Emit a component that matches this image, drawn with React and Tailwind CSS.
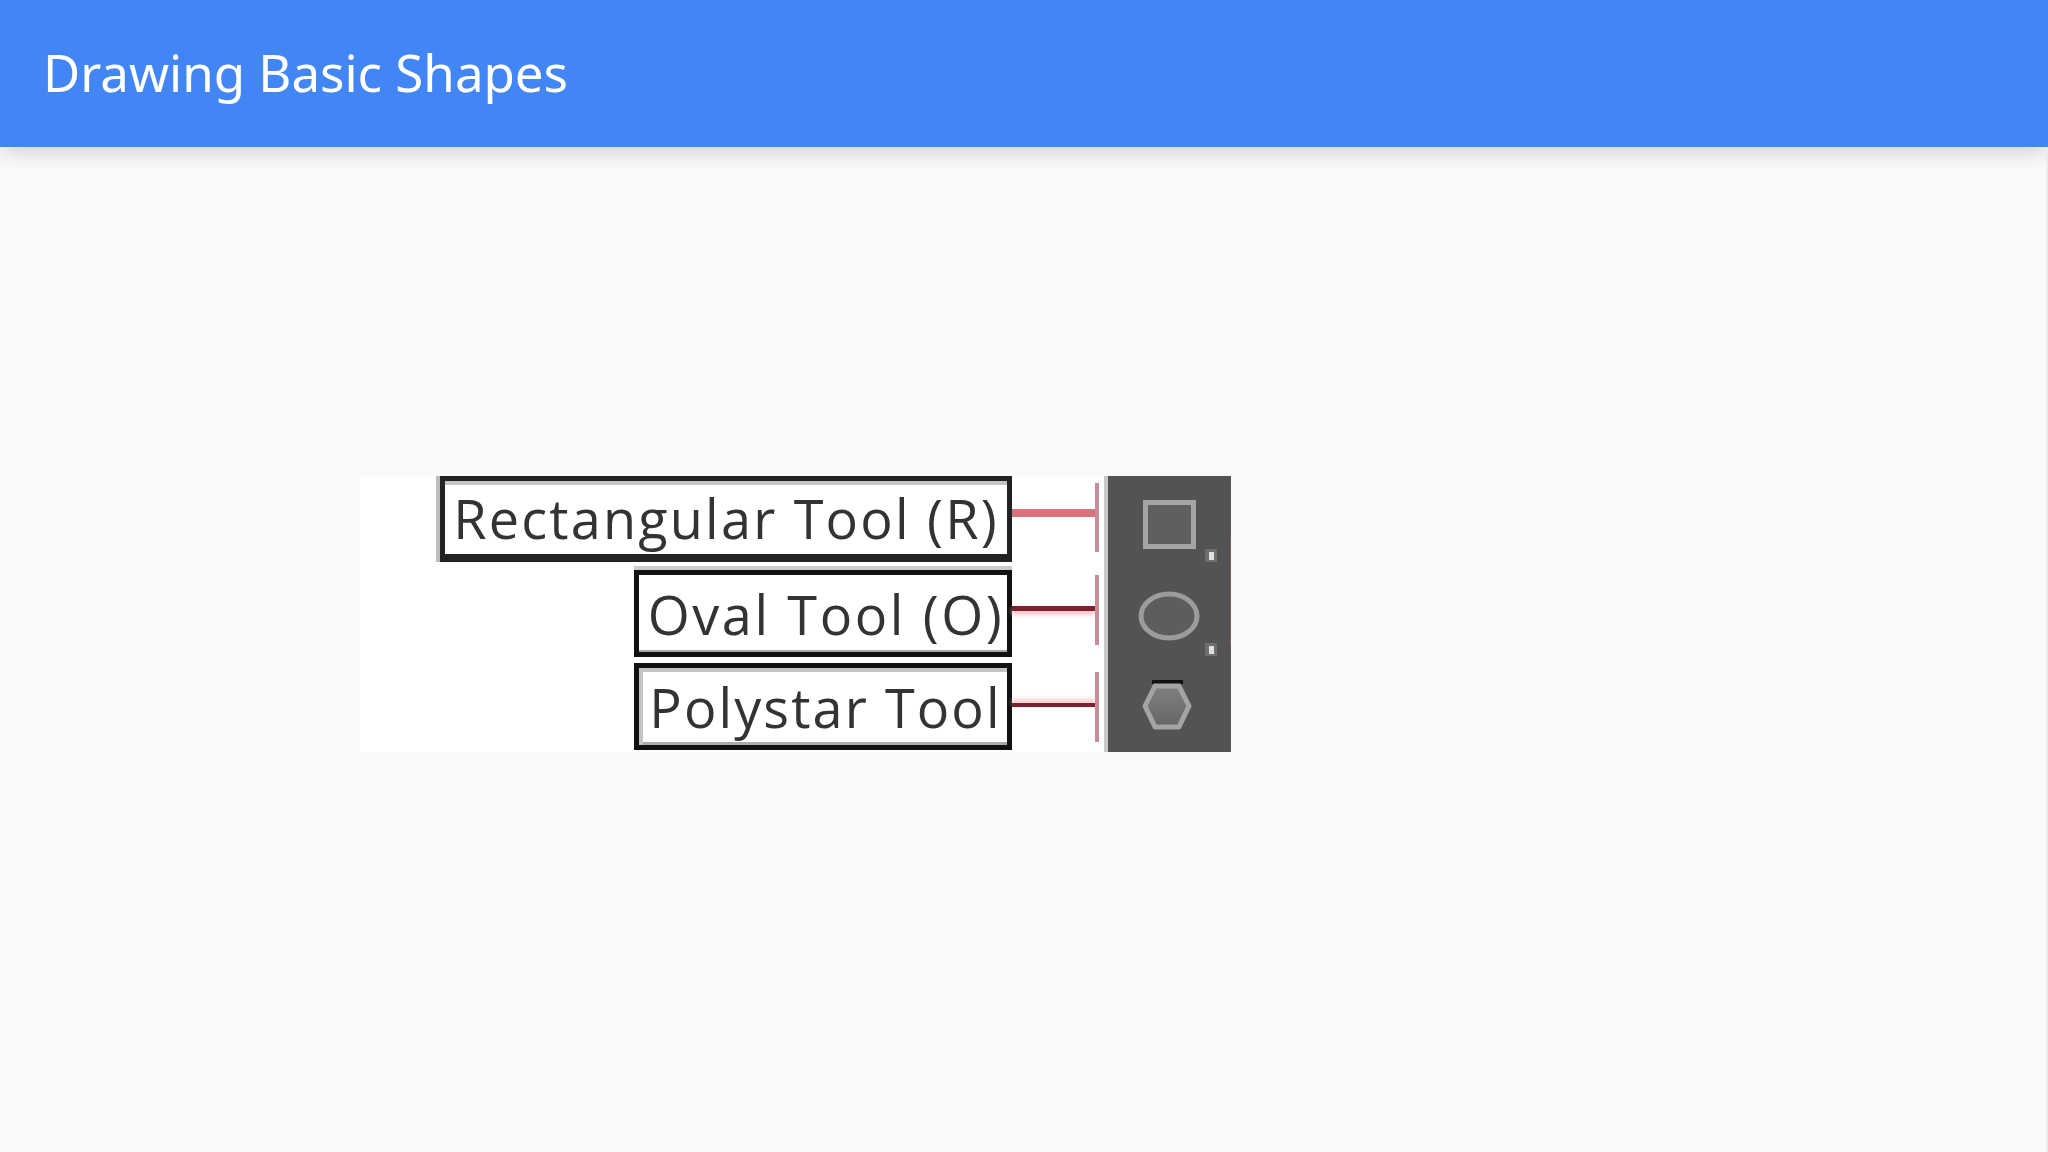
const rows = [
  { label: 'Rectangular Tool (R)', boxW: 'w-[572px]', boxH: 'h-[86px]', box: 'border-t-[5px] border-b-[8px] border-x-[5px] border-[#222] shadow-[-4px_0_0_#bbb,inset_0_4px_0_#c4c4c4]', line: 'h-[8px] bg-[#d9737b] mb-[12px]', tick: 'h-[69px] mb-[3px]', mt: 'mt-0', track: 'tracking-[2.2px]' },
  { label: 'Oval Tool (O)', boxW: 'w-[378px]', boxH: 'h-[87px]', box: 'border-[5px] border-[#111] pl-[6px] shadow-[0_-4px_0_#ccc,inset_0_-2px_0_#aaa]', line: 'h-[5px] bg-[#7d2030] mb-[11px] shadow-[0_3px_5px_#f9b0b0]', tick: 'h-[70px] mb-[7px]', mt: 'mt-[8px]', track: 'tracking-[2.6px]' },
  { label: 'Polystar Tool', boxW: 'w-[378px]', boxH: 'h-[87px]', box: 'border-[5px] border-[#111] pl-[5px] shadow-[inset_4px_4px_0_#c4c4c4,inset_0_-3px_0_#aaa]', line: 'h-[4px] bg-[#7d2030] mb-[4px] shadow-[0_-3px_5px_#f9b0b0]', tick: 'h-[70px]', mt: 'mt-[6px]', track: 'tracking-[2.1px]' },
]

const LabelRow = ({ row }) => (
  <div className={`flex items-center justify-end ${row.boxH} ${row.mt}`}>
    <div className={`${row.boxW} h-full ${row.box} bg-white flex items-center justify-center overflow-hidden`}>
      <span className={`font-['Open_Sans',sans-serif] font-normal text-[54px] leading-none whitespace-nowrap text-[#333] ${row.track}`}>
        {row.label}
      </span>
    </div>
    <div className={`w-[83px] ${row.line}`} />
    <div className={`w-[4px] ${row.tick} bg-[#c88b98]`} />
  </div>
)

// the three tool buttons of the toolbar
const ToolIcons = () => (
  <svg viewBox="0 0 123 276" className="w-full h-full block">
    <defs>
      <linearGradient id="hexFill" x1="0" y1="0" x2="0" y2="1">
        <stop offset="0" stopColor="#808080" />
        <stop offset="1" stopColor="#666666" />
      </linearGradient>
    </defs>
    <rect x="37.5" y="26.5" width="48" height="44" fill="#5f5f5f" stroke="#a5a5a5" strokeWidth="5" />
    <rect x="97" y="73" width="12" height="13" fill="#6e6e6e" />
    <rect x="101" y="76" width="5" height="8" fill="#e0e0e0" />
    <ellipse cx="61" cy="140" rx="28" ry="22" fill="#5d5d5d" stroke="#9c9c9c" strokeWidth="5" />
    <rect x="97" y="167" width="12" height="13" fill="#6e6e6e" />
    <rect x="101" y="170" width="5" height="8" fill="#e0e0e0" />
    <rect x="44" y="204" width="31" height="4" fill="#111" />
    <polygon points="47,210 71,210 81,230 71,251 47,251 37,230" fill="url(#hexFill)" stroke="#a4a4a4" strokeWidth="5" strokeLinejoin="round" />
    <rect x="122" y="60" width="1" height="110" fill="#8a5a5a" />
  </svg>
)

export default function App() {
  return (
    <div className="min-h-screen bg-[#fafafa] flex flex-col">
      <header className="h-[147px] bg-[#4285f4] flex items-center pl-[43px] shadow-[0_4px_22px_rgba(0,0,0,0.18)]">
        <h1 className="font-['Noto_Sans',sans-serif] text-[51px] leading-none font-normal text-white pb-[2px]">
          Drawing Basic Shapes
        </h1>
      </header>
      <main className="flex-1 pl-[360px] pt-[329px] border-r-2 border-[#ececec]">
        <div className="flex w-[871px] h-[276px] bg-white blur-[0.7px]">
          <div className="w-[739px] flex flex-col">
            {rows.map((row) => (
              <LabelRow key={row.label} row={row} />
            ))}
          </div>
          <div className="w-[9px] border-r-[4px] border-[#c8c8c8]" />
          <div className="w-[123px] bg-[#535353]">
            <ToolIcons />
          </div>
        </div>
      </main>
    </div>
  )
}
